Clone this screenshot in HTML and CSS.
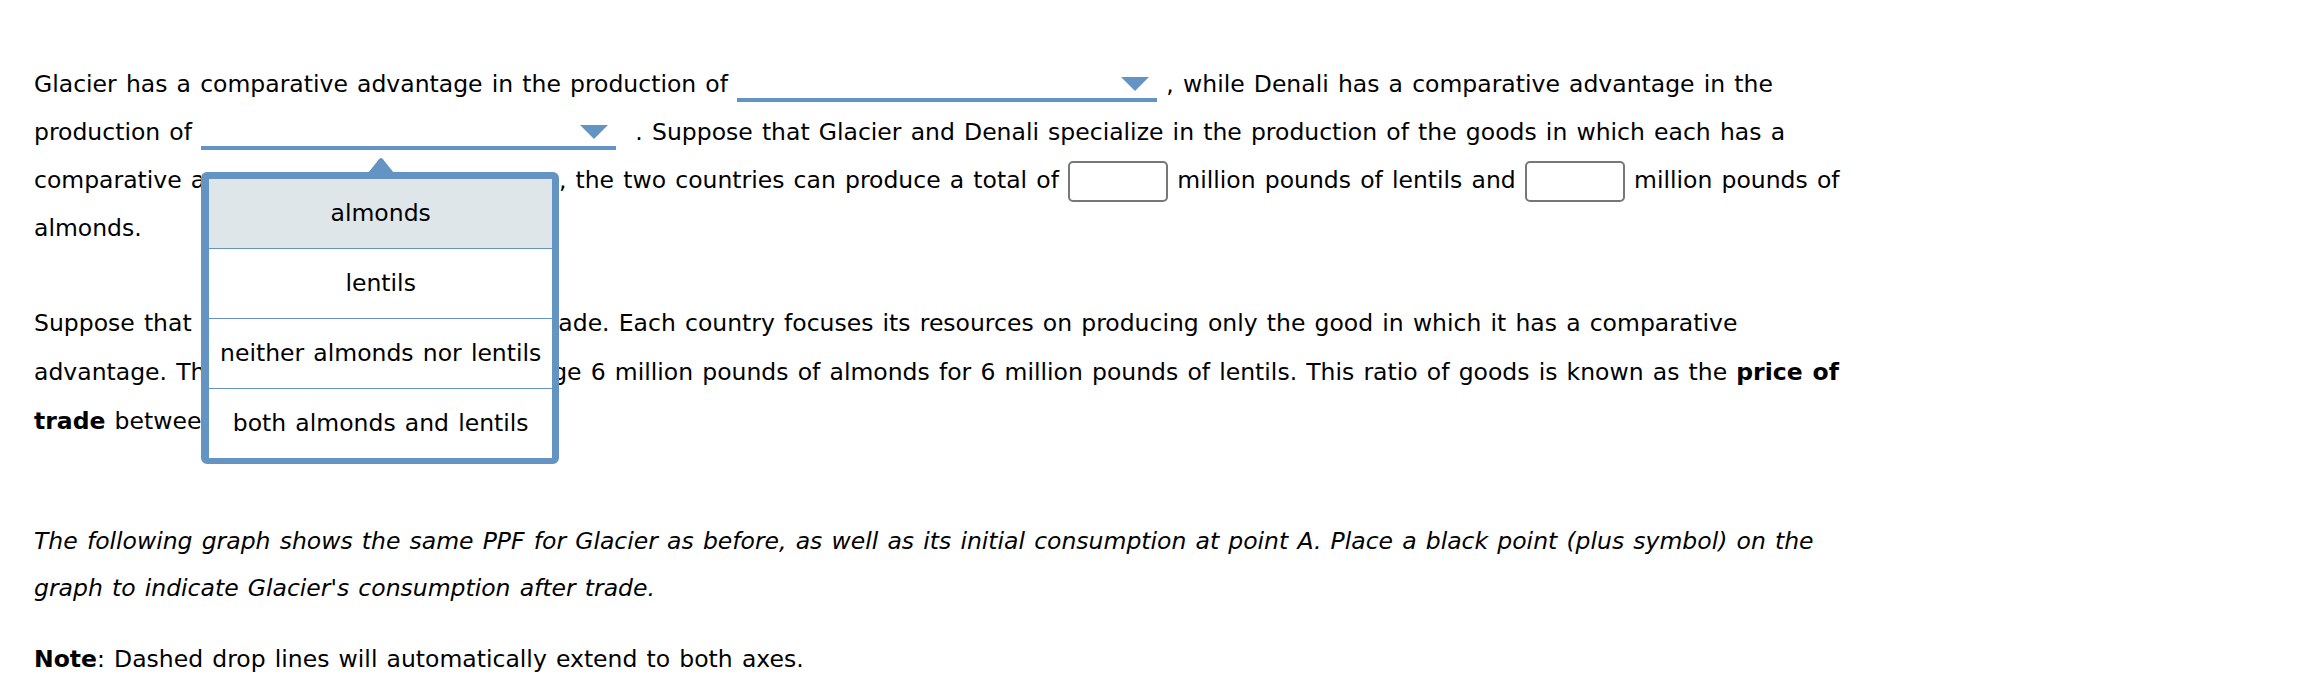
FILE: index.html
```html
<!DOCTYPE html>
<html lang="en">
<head>
<meta charset="utf-8">
<title>Comparative advantage</title>
<link rel="stylesheet" href="styles.css">
</head>
<body>
<div class="page">
  <p class="para p1">Glacier has a comparative advantage in the production of <span class="dd dd-a"><span class="dd-arrow"></span></span> , while Denali has a comparative advantage in the production of <span class="dd dd-b"><span class="dd-arrow"></span><span class="popup"><svg class="caret" width="26" height="16" viewBox="0 0 26 16"><path d="M0 16 L11 2.2 Q13 0 15 2.2 L26 16 Z" fill="#6494c4"/></svg><span class="opt active">almonds</span><span class="opt">lentils</span><span class="opt">neither almonds nor lentils</span><span class="opt">both almonds and lentils</span></span></span> . Suppose that Glacier and Denali specialize in the production of the goods in which each has a comparative advantage. After specialization, the two countries can produce a total of <input class="num" type="text" aria-label="lentils"> million pounds of lentils and <input class="num" type="text" aria-label="almonds"> million pounds of almonds.</p>
  <p class="para p2">Suppose that Glacier and Denali agree to trade. Each country focuses its resources on producing only the good in which it has a comparative advantage. The countries decide to exchange 6 million pounds of almonds for 6 million pounds of lentils. This ratio of goods is known as the <b>price of trade</b> between Glacier and Denali.</p>
  <p class="para p3">The following graph shows the same PPF for Glacier as before, as well as its initial consumption at point A. Place a black point (plus symbol) on the graph to indicate Glacier's consumption after trade.</p>
  <p class="para p4"><b>Note</b>: Dashed drop lines will automatically extend to both axes.</p>
</div>
</body>
</html>
```
FILE: styles.css
```css
html, body {
  margin: 0;
  padding: 0;
  background: #ffffff;
}
.page {
  padding: 60px 0 0 34px;
  max-width: 1828px;
  font-family: "DejaVu Sans", Verdana, sans-serif;
  font-size: 23.5px;
  line-height: 48px;
  color: #000000;
  word-spacing: 1.7px;
}
.para {
  margin: 0;
}
.p2 {
  margin-top: 46.5px;
  line-height: 49px;
}
.p3 {
  margin-top: 72px;
  font-style: italic;
  line-height: 47px;
}
.p4 {
  margin-top: 23.5px;
}
b {
  font-weight: bold;
}
.dd {
  display: inline-flex;
  justify-content: flex-end;
  align-items: flex-end;
  vertical-align: top;
  box-sizing: border-box;
  height: 42px;
  border-bottom: 4px solid #6494c4;
  padding: 0 8px 7px 0;
  position: relative;
}
.dd-a {
  width: 420px;
}
.dd-b {
  width: 415px;
  margin-right: 10px;
}
.dd-arrow {
  width: 0;
  height: 0;
  border-left: 14px solid transparent;
  border-right: 14px solid transparent;
  border-top: 14px solid #6494c4;
}
.num {
  display: inline-block;
  vertical-align: middle;
  box-sizing: border-box;
  width: 100px;
  height: 41px;
  margin: 0;
  padding: 0;
  border: 2px solid #777777;
  border-radius: 5px;
  background: #ffffff;
  font: inherit;
}
.popup {
  position: absolute;
  top: calc(100% + 26px);
  left: 0;
  width: 358px;
  box-sizing: border-box;
  border: 7px solid #6494c4;
  border-left-width: 8px;
  border-bottom-width: 6px;
  border-radius: 6px;
  background: #ffffff;
  box-shadow: 0 -4px 0 #ffffff;
  display: flex;
  flex-direction: column;
  z-index: 5;
  line-height: 1;
}
.caret {
  position: absolute;
  top: -22px;
  left: calc(50% - 13px);
  display: block;
}
.opt {
  display: flex;
  align-items: center;
  justify-content: center;
  height: 69px;
  white-space: nowrap;
  font-style: normal;
}
.opt + .opt {
  border-top: 1px solid #6494c4;
}
.opt.active {
  background: #dfe6e9;
}
```
